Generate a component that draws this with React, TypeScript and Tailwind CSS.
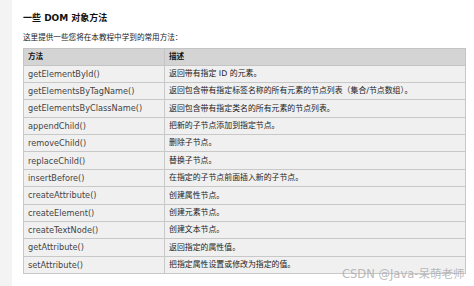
import React from 'react';

const rows: [string, string][] = [
  ['getElementById()', '返回带有指定 ID 的元素。'],
  ['getElementsByTagName()', '返回包含带有指定标签名称的所有元素的节点列表（集合/节点数组）。'],
  ['getElementsByClassName()', '返回包含带有指定类名的所有元素的节点列表。'],
  ['appendChild()', '把新的子节点添加到指定节点。'],
  ['removeChild()', '删除子节点。'],
  ['replaceChild()', '替换子节点。'],
  ['insertBefore()', '在指定的子节点前面插入新的子节点。'],
  ['createAttribute()', '创建属性节点。'],
  ['createElement()', '创建元素节点。'],
  ['createTextNode()', '创建文本节点。'],
  ['getAttribute()', '返回指定的属性值。'],
  ['setAttribute()', '把指定属性设置或修改为指定的值。'],
];

const font = { fontFamily: '"DejaVu Sans", "Noto Sans CJK SC", sans-serif' };

const App = () => {
  return (
    <div className="flex h-[286px] w-[474px] overflow-hidden bg-white" style={font}>
      <div className="w-[12px] bg-[#f3f3f3]"></div>
      <div className="relative flex-1 pl-[11px] pt-[12px]">
        <h2 className="text-[9px] font-bold leading-[12px] text-[#111]">一些 DOM 对象方法</h2>
        <p className="mt-[8px] text-[7.6px] leading-[12px] text-[#222]">
          这里提供一些您将在本教程中学到的常用方法：
        </p>
        <table className="mt-[4px] w-[443px] border-collapse text-[7.6px] text-[#333]">
          <thead>
            <tr className="h-[16.5px] bg-[#d4d4d4]">
              <th className="w-[141px] border border-[#c4c4c4] pl-[4px] text-left font-bold text-[#111]">
                方法
              </th>
              <th className="border border-[#c4c4c4] pl-[4px] text-left font-bold text-[#111]">描述</th>
            </tr>
          </thead>
          <tbody>
            {rows.map(([m, d]) => (
              <tr key={m} className="h-[17.4px] bg-[#f0f0f0]">
                <td className="border border-[#c8c8c8] pl-[4px] text-[8.2px] text-[#444]">{m}</td>
                <td className="border border-[#c8c8c8] pl-[4px] text-[7.9px] text-[#222]">{d}</td>
              </tr>
            ))}
          </tbody>
        </table>
        <div className="absolute left-[330px] top-[267px] text-[11.5px] leading-[14px] text-[#a8a8a8]/80">
          CSDN @Java-呆萌老师
        </div>
      </div>
    </div>
  );
};

export default App;
